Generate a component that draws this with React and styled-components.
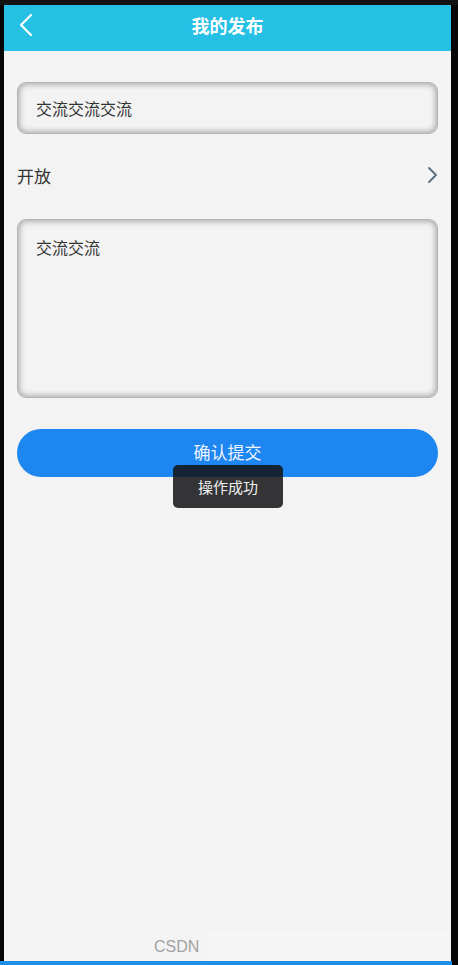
import React from 'react';
import styled, { createGlobalStyle } from 'styled-components';

const Global = createGlobalStyle`
  html, body {
    margin: 0;
    padding: 0;
    background: #050505;
  }
  * { box-sizing: border-box; }
`;

const Frame = styled.div`
  width: 458px;
  height: 965px;
  display: flex;
  flex-direction: column;
  background: #050505;
  border-top: 5px solid #121212;
  font-family: "Noto Sans CJK SC", "Noto Sans", sans-serif;
`;

const Body = styled.div`
  flex: 1;
  display: flex;
  padding: 0 7px 0 4px;
  min-height: 0;
`;

const Screen = styled.div`
  position: relative;
  flex: 1;
  display: flex;
  flex-direction: column;
  background: #f3f3f3;
  overflow: hidden;
`;

const BlueLine = styled.div`
  height: 4px;
  margin-right: 6px;
  background: #1b8fea;
`;

const Header = styled.div`
  position: relative;
  height: 46px;
  display: flex;
  align-items: center;
  justify-content: center;
  padding-bottom: 6px;
  background: #26c0e5;
  color: #fff;
  font-size: 18px;
  font-weight: 700;
`;

const Back = styled.svg`
  position: absolute;
  left: 14px;
  top: 8px;
`;

const Content = styled.div`
  display: flex;
  flex-direction: column;
  padding: 31px 13px 0;
`;

const Field = styled.div`
  height: ${p => p.$h}px;
  padding: ${p => p.$pad};
  border: 1px solid #b4b4b6;
  border-radius: 9px;
  background: #f3f3f3;
  box-shadow: inset 0 0 6px 1px rgba(0, 0, 0, 0.35);
  color: #333;
  font-size: 16px;
  display: flex;
  align-items: ${p => (p.$top ? 'flex-start' : 'center')};
`;

const Row = styled.div`
  margin: 18px 0 21px;
  height: 46px;
  display: flex;
  align-items: center;
  justify-content: space-between;
  color: #333;
  font-size: 17px;
`;

const Button = styled.div`
  margin-top: 31px;
  height: 48px;
  border-radius: 24px;
  background: #1d86f0;
  color: #eef4ff;
  font-size: 17px;
  display: flex;
  align-items: center;
  justify-content: center;
  padding-bottom: 3px;
`;

const Toast = styled.div`
  position: absolute;
  top: 460px;
  left: 169px;
  width: 110px;
  height: 43px;
  border-radius: 5px;
  background: rgba(20, 20, 22, 0.86);
  color: #f0f0f0;
  font-size: 15px;
  display: flex;
  align-items: center;
  justify-content: center;
`;

const Watermark = styled.div`
  position: absolute;
  left: 150px;
  bottom: 5px;
  color: #a2a2a2;
  font-family: "Liberation Sans", Arial, sans-serif;
  font-size: 16px;
`;

const Glare = styled.div`
  position: absolute;
  left: 204px;
  right: 0;
  bottom: 0;
  height: 30px;
  background: #f5f5f5;
`;

export default function App() {
  return (
    <>
      <Global />
      <Frame>
        <Body>
          <Screen>
            <Header>
              <Back width="16" height="24" viewBox="0 0 16 24">
                <polyline points="13,2 3,12 13,22" fill="none" stroke="#fff" strokeWidth="2.2" strokeLinecap="round" strokeLinejoin="round" />
              </Back>
              我的发布
            </Header>
            <Content>
              <Field $h={52} $pad="0 18px">交流交流交流</Field>
              <Row>
                <span>开放</span>
                <svg width="12" height="18" viewBox="0 0 12 18">
                  <polyline points="3,2 10,9 3,16" fill="none" stroke="#5c6b78" strokeWidth="1.8" strokeLinecap="round" strokeLinejoin="round" />
                </svg>
              </Row>
              <Field $h={179} $pad="15px 18px" $top>交流交流</Field>
              <Button>确认提交</Button>
            </Content>
            <Toast>操作成功</Toast>
            <Glare />
            <Watermark>CSDN</Watermark>
          </Screen>
        </Body>
        <BlueLine />
      </Frame>
    </>
  );
}
